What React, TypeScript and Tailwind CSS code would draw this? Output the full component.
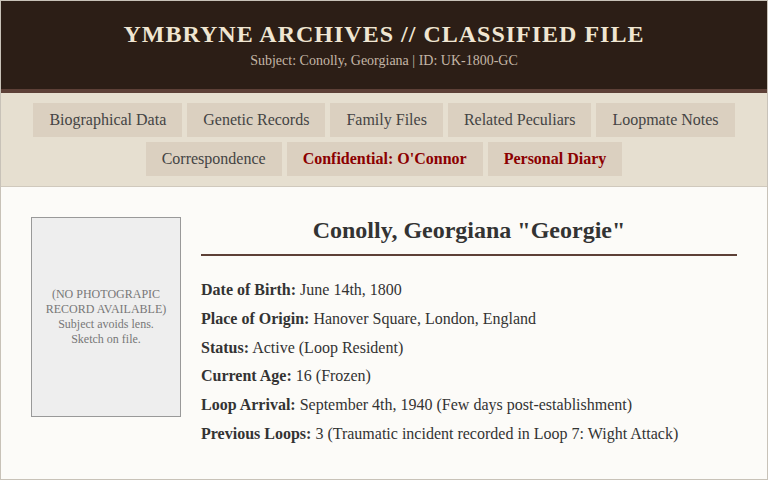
import React from "react";

const tabs1 = ["Biographical Data", "Genetic Records", "Family Files", "Related Peculiars", "Loopmate Notes"];
const tabs2: { label: string; red?: boolean }[] = [
  { label: "Correspondence" },
  { label: "Confidential: O'Connor", red: true },
  { label: "Personal Diary", red: true },
];

const details: [string, string][] = [
  ["Date of Birth:", "June 14th, 1800"],
  ["Place of Origin:", "Hanover Square, London, England"],
  ["Status:", "Active (Loop Resident)"],
  ["Current Age:", "16 (Frozen)"],
  ["Loop Arrival:", "September 4th, 1940 (Few days post-establishment)"],
  ["Previous Loops:", "3 (Traumatic incident recorded in Loop 7: Wight Attack)"],
];

function Tab({ label, red }: { label: string; red?: boolean }) {
  return (
    <div
      className={
        "bg-[#dbd0c0] px-4 py-2 text-[16px] leading-[18px] " +
        (red ? "font-bold text-[#8b0000]" : "text-[#444]")
      }
    >
      {label}
    </div>
  );
}

export default function App() {
  return (
    <div
      className="w-[768px] h-[480px] overflow-hidden bg-[#e8e2d6]"
      style={{ fontFamily: '"Liberation Serif", "Times New Roman", serif' }}
    >
      <div className="border border-[#c8c2b8] bg-[#fcfbf8] min-h-[480px]">
        <header className="bg-[#2c1e16] border-b-4 border-[#5d4037] pt-[17px] pb-[19px] text-center">
          <h1 className="text-[24px] leading-[32px] font-bold tracking-[1px] text-[#f0e6d2]">
            YMBRYNE ARCHIVES // CLASSIFIED FILE
          </h1>
          <div className="mt-[2px] text-[14px] leading-[18px] text-[#c4b6a6]">
            Subject: Conolly, Georgiana | ID: UK-1800-GC
          </div>
        </header>
        <nav className="bg-[#e6dfd0] border-b border-[#d0c9bd] py-[10px] flex flex-col items-center gap-[5px]">
          <div className="flex gap-[5px]">
            {tabs1.map((t) => (
              <Tab key={t} label={t} />
            ))}
          </div>
          <div className="flex gap-[5px]">
            {tabs2.map((t) => (
              <Tab key={t.label} label={t.label} red={t.red} />
            ))}
          </div>
        </nav>
        <main className="p-[30px] flex gap-[20px]">
          <div className="w-[150px] h-[200px] shrink-0 bg-[#eeeeee] border border-[#999] flex items-center justify-center text-center text-[12px] leading-[15px] text-[#777] px-[6px]">
            <div>
              (NO PHOTOGRAPIC RECORD AVAILABLE)
              <br />
              Subject avoids lens.
              <br />
              Sketch on file.
            </div>
          </div>
          <div className="flex-1 text-[#333]">
            <h2 className="text-[24px] leading-[27px] font-bold text-center pb-[10px] border-b-2 border-[#5d4037]">
              Conolly, Georgiana "Georgie"
            </h2>
            <div className="mt-[20px] text-[16px] leading-[28.8px]">
              {details.map(([k, v]) => (
                <div key={k}>
                  <span className="font-bold">{k}</span> {v}
                </div>
              ))}
            </div>
          </div>
        </main>
      </div>
    </div>
  );
}
